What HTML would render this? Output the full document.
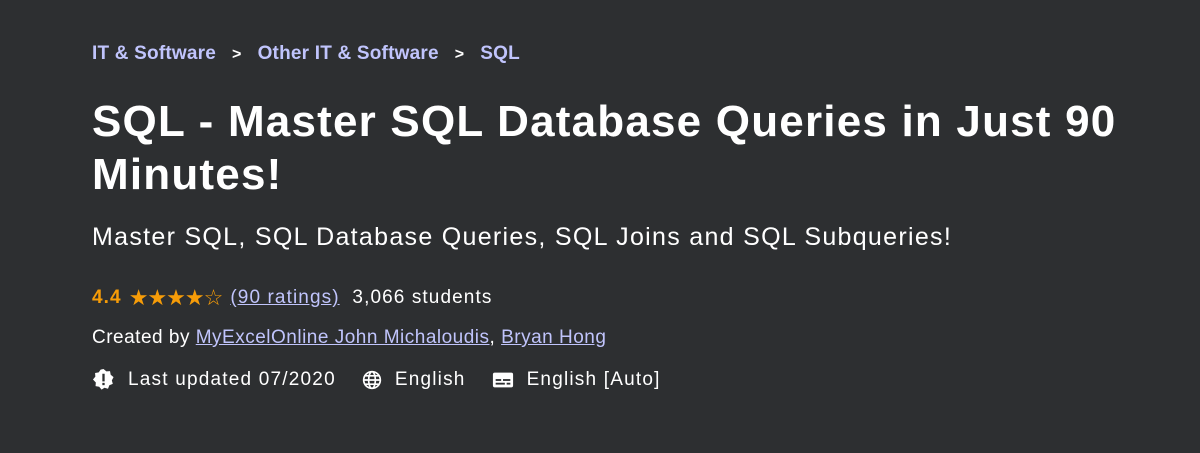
<!DOCTYPE html>
<html><head><meta charset="utf-8"><style>
body{margin:0;width:1200px;height:453px;background:#2d2f31;font-family:"Liberation Sans",sans-serif;color:#fff;overflow:hidden}
.w{position:absolute;left:92px;top:0;width:1080px}
.bc{position:absolute;top:43px;font-size:19px;font-weight:bold;color:#c0c4fc;white-space:nowrap;letter-spacing:0.2px}
.bc .s{color:#fff;margin:0 16px;font-size:16px}
h1{position:absolute;top:95px;margin:0;font-size:44px;line-height:53px;font-weight:bold;width:1080px;letter-spacing:1.2px}
.sub{position:absolute;top:223px;font-size:25px;white-space:nowrap;letter-spacing:1.3px}
.r{position:absolute;top:285px;font-size:19px;white-space:nowrap;display:flex;align-items:center;letter-spacing:1.1px}
.r b{color:#f69c08;margin-right:7px}
.st{color:#f69c08;font-size:22px;letter-spacing:-1px;margin-right:8px}
a{color:#c0c4fc;text-decoration:underline}
.c{position:absolute;top:327px;font-size:19px;white-space:nowrap;letter-spacing:0.5px}
.u{position:absolute;top:368px;font-size:19px;white-space:nowrap;display:flex;align-items:center;letter-spacing:1.2px}
.u svg{margin-right:13px}
</style></head><body><div class="w">
<div class="bc">IT &amp; Software<span class="s">&gt;</span>Other IT &amp; Software<span class="s">&gt;</span>SQL</div>
<h1>SQL - Master SQL Database Queries in Just 90 Minutes!</h1>
<div class="sub">Master SQL, SQL Database Queries, SQL Joins and SQL Subqueries!</div>
<div class="r"><b>4.4</b><span class="st">★★★★☆</span><a>(90 ratings)</a>&nbsp;&nbsp;3,066 students</div>
<div class="c">Created by <a>MyExcelOnline John Michaloudis</a>, <a>Bryan Hong</a></div>
<div class="u">
<svg width="23" height="23" viewBox="0 0 24 24"><path fill="#fff" d="M12 1l3 2.5 3.8-.3.7 3.8 3 2.5-1.8 3.4 1 3.7-3.6 1.4-1.4 3.6-3.7-1-3 1.9-2.5-3-3.8-.6.3-3.8L1 12l2.5-3-.3-3.8 3.8-.7L9 1.7z"/><rect x="10.8" y="6" width="2.4" height="8" fill="#2d2f31"/><rect x="10.8" y="15.5" width="2.4" height="2.4" fill="#2d2f31"/></svg>
<span>Last updated 07/2020</span>
<svg style="margin-left:26px" width="20" height="20" viewBox="0 0 24 24" fill="none" stroke="#fff" stroke-width="2"><circle cx="12" cy="12" r="10"/><ellipse cx="12" cy="12" rx="4" ry="10"/><path d="M2 12h20M4 7h16M4 17h16"/></svg>
<span>English</span>
<svg style="margin-left:26px" width="22" height="20" viewBox="0 0 24 20"><rect x="1" y="2" width="22" height="16" rx="2" fill="#fff"/><rect x="4" y="9" width="6" height="2" fill="#2d2f31"/><rect x="12" y="9" width="8" height="2" fill="#2d2f31"/><rect x="4" y="13" width="10" height="2" fill="#2d2f31"/><rect x="16" y="13" width="4" height="2" fill="#2d2f31"/></svg>
<span>English [Auto]</span>
</div>
</div></body></html>
